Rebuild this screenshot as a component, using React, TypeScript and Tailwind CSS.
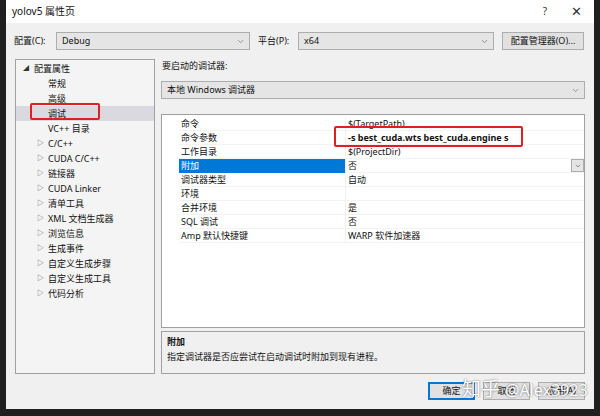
import { ChevronDown } from "lucide-react";

const font = "font-['Noto_Sans','Noto_Sans_CJK_SC',sans-serif]";

type TreeItem = { label: string; arrow?: boolean; selected?: boolean };

const treeItems: TreeItem[] = [
  { label: "常规" },
  { label: "高级" },
  { label: "调试", selected: true },
  { label: "VC++ 目录" },
  { label: "C/C++", arrow: true },
  { label: "CUDA C/C++", arrow: true },
  { label: "链接器", arrow: true },
  { label: "CUDA Linker", arrow: true },
  { label: "清单工具", arrow: true },
  { label: "XML 文档生成器", arrow: true },
  { label: "浏览信息", arrow: true },
  { label: "生成事件", arrow: true },
  { label: "自定义生成步骤", arrow: true },
  { label: "自定义生成工具", arrow: true },
  { label: "代码分析", arrow: true },
];

const props: { name: string; value: string; bold?: boolean; selected?: boolean }[] = [
  { name: "命令", value: "$(TargetPath)" },
  { name: "命令参数", value: "-s best_cuda.wts best_cuda.engine s", bold: true },
  { name: "工作目录", value: "$(ProjectDir)" },
  { name: "附加", value: "否", selected: true },
  { name: "调试器类型", value: "自动" },
  { name: "环境", value: "" },
  { name: "合并环境", value: "是" },
  { name: "SQL 调试", value: "否" },
  { name: "Amp 默认快捷键", value: "WARP 软件加速器" },
];

function Combo({ text, className = "" }: { text: string; className?: string }) {
  return (
    <div
      className={`flex items-center h-[18px] bg-[#e5e5e5] border border-[#adadad] pl-[5px] pr-[4px] ${className}`}
    >
      <span className="flex-1">{text}</span>
      <ChevronDown className="w-[9px] h-[9px] text-[#777]" strokeWidth={2} />
    </div>
  );
}

function Button({ text, primary }: { text: string; primary?: boolean }) {
  return (
    <div
      className={`flex items-center justify-center w-[47px] h-[18px] bg-[#e1e1e1] ${
        primary ? "border-2 border-[#0078d7]" : "border border-[#adadad]"
      }`}
    >
      {text}
    </div>
  );
}

export default function App() {
  return (
    <div className={`w-[600px] h-[416px] bg-[#1f1f1f] overflow-hidden text-[9px] text-[#111] ${font}`}>
      <div className="ml-[6px] w-[588px] h-[409px] bg-[#f0f0f0] flex flex-col relative">
        {/* title bar */}
        <div className="h-[23px] bg-white flex items-center pl-[6px] pr-[12px] text-[10px]">
          <span className="flex-1">yolov5 属性页</span>
          <span className="w-[12px] text-center mr-[20px] text-[#333]">?</span>
          <span className="text-[13px] leading-none text-[#333]">✕</span>
        </div>

        {/* config row */}
        <div className="flex items-center mt-[9px] pl-[8px] pr-[10px]">
          <span className="w-[42px]">配置(C):</span>
          <Combo text="Debug" className="w-[194px]" />
          <span className="ml-[8px] w-[40px]">平台(P):</span>
          <Combo text="x64" className="w-[196px]" />
          <div className="ml-[8px] w-[82px] h-[18px] flex items-center justify-center bg-[#e1e1e1] border border-[#adadad]">
            配置管理器(O)...
          </div>
        </div>

        {/* main area */}
        <div className="flex mt-[9px] pl-[9px] pr-[9px]">
          {/* tree */}
          <div className="w-[140px] h-[315px] bg-[#f4f4f4] border border-[#a0a0a0] pt-[1px] relative">
            <div className="h-[15px] flex items-center">
              <span className="w-[18px] pl-[7px] text-[6px] text-[#333]">◢</span>
              <span>配置属性</span>
            </div>
            {treeItems.map((it) => (
              <div
                key={it.label}
                className={`h-[15px] flex items-center ${it.selected ? "bg-[#d9d9df]" : ""}`}
              >
                <span className="w-[32px] pl-[21px] text-[7px] text-[#555]">{it.arrow ? "▷" : ""}</span>
                <span>{it.label}</span>
              </div>
            ))}
            <div className="absolute left-[14px] top-[43px] w-[70px] h-[17px] border-2 border-[#e02020] rounded-[2px]" />
          </div>

          {/* right */}
          <div className="ml-[6px] flex-1 flex flex-col">
            <div className="h-[14px] flex items-center pl-[1px]">要启动的调试器:</div>
            <Combo text="本地 Windows 调试器" className="mt-[8px]" />

            <div className="mt-[15px] h-[214px] bg-white border border-[#a0a0a0] pt-[2px] relative">
              {props.map((p) => (
                <div key={p.name} className="h-[14px] flex items-stretch">
                  <div className="w-[17px]" />
                  <div
                    className={`w-[166px] flex items-center pl-[2px] ${
                      p.selected ? "bg-[#0078d7] text-white" : "border-b border-[#f3f3f3]"
                    }`}
                  >
                    {p.name}
                  </div>
                  <div className="w-px bg-[#f0f0f0]" />
                  <div
                    className={`flex-1 flex items-center pl-[2px] border-b border-[#f3f3f3] ${
                      p.bold ? "font-bold" : ""
                    }`}
                  >
                    <span className="flex-1">{p.value}</span>
                    {p.selected && (
                      <div className="w-[13px] h-[13px] border border-[#adadad] bg-[#e5e5e5] flex items-center justify-center">
                        <ChevronDown className="w-[8px] h-[8px] text-[#666]" strokeWidth={2} />
                      </div>
                    )}
                  </div>
                </div>
              ))}
              <div className="absolute left-[172px] top-[11px] w-[189px] h-[21px] border-2 border-[#e02020] rounded-[2px]" />
            </div>

            <div className="mt-[3px] h-[43px] border border-[#a0a0a0] bg-[#f0f0f0] pl-[5px] pt-[2px] leading-[15px]">
              <div className="font-bold">附加</div>
              <div>指定调试器是否应尝试在启动调试时附加到现有进程。</div>
            </div>
          </div>
        </div>

        {/* buttons */}
        <div className="flex justify-end gap-[8px] mt-[8px] pr-[9px]">
          <Button text="确定" primary />
          <Button text="取消" />
          <Button text="应用(A)" />
        </div>

        <div className="absolute left-[456px] top-[380px] flex items-baseline gap-[5px] whitespace-nowrap leading-none text-white [text-shadow:0_0_2px_rgba(0,0,0,0.6)]">
          <span className="text-[19px]">知乎</span>
          <span className="text-[16px]">@Alex3923</span>
        </div>
      </div>
    </div>
  );
}
